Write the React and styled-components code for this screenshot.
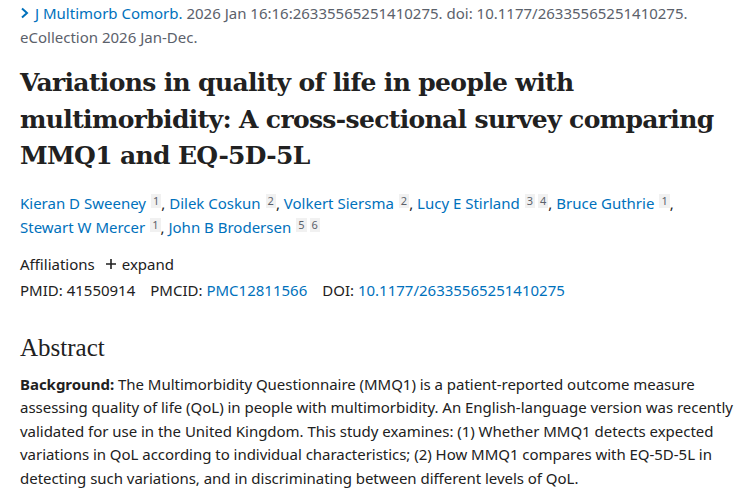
import React from "react";
import styled, { createGlobalStyle } from "styled-components";

const Global = createGlobalStyle`
  html, body { margin: 0; padding: 0; background: #fff; }
  body { font-family: "Noto Sans", "Open Sans", sans-serif; color: #212121; }
`;

const Page = styled.main`
  padding: 1px 0 0 20px;
  width: 722px;
`;

const Citation = styled.div`
  font-size: 15px;
  line-height: 24px;
  color: #5b616b;
`;

const JournalLink = styled.a`
  color: #0071bc;
  text-decoration: none;
  display: inline-flex;
  align-items: center;
  gap: 6px;
`;

const Title = styled.h1`
  font-family: "DejaVu Serif", serif;
  font-weight: 700;
  font-size: 25px;
  line-height: 36.5px;
  letter-spacing: -0.65px;
  margin: 16px 0 0 0;
  color: #212121;
`;

const Authors = styled.div`
  margin-top: 16px;
  font-size: 15px;
  line-height: 24px;
`;

const AuthorItem = styled.span`
  white-space: nowrap;
`;

const AuthorLink = styled.a`
  color: #0071bc;
  text-decoration: none;
`;

const SupGroup = styled.span`
  display: inline-flex;
  gap: 3px;
  margin-left: 5px;
  vertical-align: 4px;
`;

const Sup = styled.span`
  display: inline-block;
  background: #f1f1f1;
  color: #5b616b;
  font-size: 11px;
  line-height: 14px;
  padding: 0 2px;
  min-width: 6px;
  text-align: center;
`;

const Meta = styled.div`
  margin-top: 12px;
  font-size: 15px;
  line-height: 26px;
`;

const ExpandBtn = styled.span`
  margin-left: 10px;
  display: inline-flex;
  align-items: center;
  gap: 5px;
`;

const IdRow = styled.div`
  display: flex;
  gap: 15px;
`;

const IdLink = styled.a`
  color: #0071bc;
  text-decoration: none;
`;

const AbstractHeading = styled.h2`
  font-family: "Liberation Serif", serif;
  font-weight: 400;
  font-size: 25px;
  line-height: 30px;
  margin: 30px 0 0 0;
`;

const Paragraph = styled.p`
  margin: 10px 0 0 0;
  font-size: 15px;
  line-height: 23.5px;
  letter-spacing: -0.03px;
`;

const Label = styled.strong`
  font-weight: 700;
`;

const authors = [
  ["Kieran D Sweeney", ["1"]],
  ["Dilek Coskun", ["2"]],
  ["Volkert Siersma", ["2"]],
  ["Lucy E Stirland", ["3", "4"]],
  ["Bruce Guthrie", ["1"]],
  ["Stewart W Mercer", ["1"]],
  ["John B Brodersen", ["5", "6"]],
];

export default function App() {
  return (
    <Page>
      <Global />
      <Citation>
        <JournalLink href="#">
          <svg width="9" height="12" viewBox="0 0 9 12">
            <path d="M2 1.5 L7 6 L2 10.5" fill="none" stroke="#0071bc" strokeWidth="2" />
          </svg>
          J Multimorb Comorb.
        </JournalLink>{" "}
        2026 Jan 16:16:26335565251410275. doi: 10.1177/26335565251410275.
        <br />
        eCollection 2026 Jan-Dec.
      </Citation>
      <Title>
        Variations in quality of life in people with multimorbidity: A cross-sectional survey comparing MMQ1 and EQ-5D-5L
      </Title>
      <Authors>
        {authors.map(([name, sups], i) => (
          <React.Fragment key={name}>
            <AuthorItem>
              <AuthorLink href="#">{name}</AuthorLink>
              <SupGroup>
                {sups.map((s) => (
                  <Sup key={s}>{s}</Sup>
                ))}
              </SupGroup>
              {i < authors.length - 1 ? "," : ""}
            </AuthorItem>{" "}
          </React.Fragment>
        ))}
      </Authors>
      <Meta>
        <div>
          Affiliations
          <ExpandBtn>
            <svg width="12" height="12" viewBox="0 0 12 12">
              <path d="M6 1 V11 M1 6 H11" stroke="#212121" strokeWidth="1.6" />
            </svg>
            expand
          </ExpandBtn>
        </div>
        <IdRow>
          <span>PMID: 41550914</span>
          <span>
            PMCID: <IdLink href="#">PMC12811566</IdLink>
          </span>
          <span>
            DOI: <IdLink href="#">10.1177/26335565251410275</IdLink>
          </span>
        </IdRow>
      </Meta>
      <AbstractHeading>Abstract</AbstractHeading>
      <Paragraph>
        <Label>Background:</Label> The Multimorbidity Questionnaire (MMQ1) is a patient-reported outcome measure
        assessing quality of life (QoL) in people with multimorbidity. An English-language version was recently
        validated for use in the United Kingdom. This study examines: (1) Whether MMQ1 detects expected
        variations in QoL according to individual characteristics; (2) How MMQ1 compares with EQ-5D-5L in
        detecting such variations, and in discriminating between different levels of QoL.
      </Paragraph>
    </Page>
  );
}
